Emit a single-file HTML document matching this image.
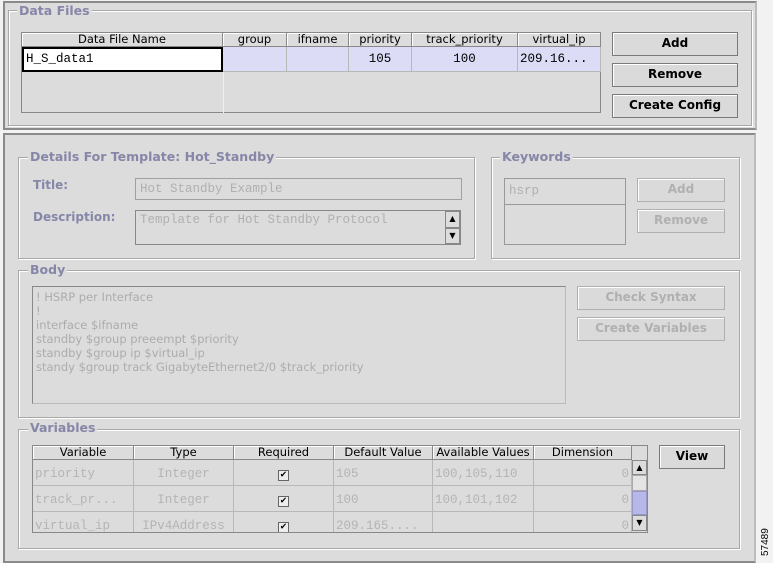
<!DOCTYPE html>
<html><head><meta charset="utf-8"><style>
*{box-sizing:border-box;margin:0;padding:0}
body{width:773px;height:557px;background:#f2f2f2;position:relative;overflow:hidden;font-family:"DejaVu Sans","Liberation Sans",sans-serif;font-size:12px;color:#000}
.a{position:absolute}
.panel{background:#dcdcdc}
.grp{position:absolute;border:1px solid #a8a8a8;box-shadow:1px 1px 0 #fff inset,1px 1px 0 #fff}
.gt{position:absolute;background:#dcdcdc;color:#8686a8;font-weight:bold;font-size:12.5px;padding:0 2px;line-height:14px}
.btn{position:absolute;border:1px solid #7a7a7a;background:#dadada;box-shadow:1px 1px 0 #fff inset;text-align:center;font-weight:bold;font-size:12px;line-height:21px}
.btn.d{color:#b0b0b0;border-color:#b0b0b0}
.th{position:absolute;top:0;height:14px;border-right:1px solid #888;border-bottom:1px solid #888;background:#dcdcdc;text-align:center;font-size:11.5px;line-height:13px;box-shadow:1px 1px 0 #fff inset}
.c{position:absolute;border-right:1px solid #b8b8b8;border-bottom:1px solid #b8b8b8;font-family:"Liberation Mono","DejaVu Sans Mono",monospace;font-size:12.5px;line-height:24px;white-space:nowrap;overflow:hidden}
.v{line-height:28px}
.g{color:#b4b4b4}
.lbl{position:absolute;color:#8686a8;font-weight:bold;font-size:12px}
.fld{position:absolute;border:1px solid #a0a0a0;background:#dcdcdc;font-family:"Liberation Mono",monospace;font-size:12.5px;color:#b0b0b0;padding-left:4px}
.sb{position:absolute;width:15px;background:#dcdcdc;border:1px solid #888;text-align:center;font-size:8px;line-height:13px}
.chk{position:absolute;width:11px;height:11px;border:1px solid #666;background:#eee;font-size:10px;line-height:9px;text-align:center;font-weight:bold}
</style></head><body>
<div class="a panel" style="left:3px;top:1px;width:754px;height:129px;border:2px solid #8a8a8a;border-right-color:#bcbcbc"></div>
<div class="grp" style="left:8px;top:10px;width:744px;height:116px"></div>
<div class="gt" style="left:17px;top:4px">Data Files</div>
<div class="a" style="left:21px;top:32px;width:580px;height:81px;border:1px solid #888;background:#dcdcdc">
 <div class="th" style="left:0;width:201px">Data File Name</div>
 <div class="th" style="left:201px;width:64px">group</div>
 <div class="th" style="left:265px;width:62px">ifname</div>
 <div class="th" style="left:327px;width:63px">priority</div>
 <div class="th" style="left:390px;width:106px">track_priority</div>
 <div class="th" style="left:496px;width:83px">virtual_ip</div>
 <div class="c" style="left:0;top:14px;width:201px;height:25px;background:#fff;border:2px solid #000;padding-left:2px;line-height:21px">H_S_data1</div>
 <div class="c" style="left:201px;top:14px;width:64px;height:25px;background:#dcdcf6"></div>
 <div class="c" style="left:265px;top:14px;width:62px;height:25px;background:#dcdcf6"></div>
 <div class="c" style="left:327px;top:14px;width:63px;height:25px;background:#dcdcf6;text-align:center">105</div>
 <div class="c" style="left:390px;top:14px;width:106px;height:25px;background:#dcdcf6;text-align:center">100</div>
 <div class="c" style="left:496px;top:14px;width:83px;height:25px;background:#dcdcf6;padding-left:2px">209.16...</div>
 <div class="a" style="left:201px;top:39px;width:1px;height:41px;background:#f0f0f0"></div>
</div>
<div class="btn" style="left:612px;top:32px;width:126px;height:24px">Add</div>
<div class="btn" style="left:612px;top:63px;width:126px;height:24px">Remove</div>
<div class="btn" style="left:612px;top:94px;width:126px;height:24px">Create Config</div>

<div class="a panel" style="left:3px;top:133px;width:753px;height:430px;border:2px solid #8a8a8a;border-right-color:#bcbcbc"></div>

<div class="grp" style="left:18px;top:157px;width:457px;height:102px"></div>
<div class="gt" style="left:28px;top:150px">Details For Template: Hot_Standby</div>
<div class="lbl" style="left:33px;top:178px">Title:</div>
<div class="fld" style="left:135px;top:178px;width:327px;height:22px;line-height:20px">Hot Standby Example</div>
<div class="lbl" style="left:33px;top:210px">Description:</div>
<div class="fld" style="left:135px;top:210px;width:326px;height:35px;line-height:18px;border-color:#888">Template for Hot Standby Protocol</div>
<div class="sb" style="left:445px;top:211px;height:17px">▲</div>
<div class="sb" style="left:445px;top:228px;height:16px">▼</div>

<div class="grp" style="left:491px;top:157px;width:249px;height:102px"></div>
<div class="gt" style="left:500px;top:150px">Keywords</div>
<div class="fld" style="left:504px;top:178px;width:122px;height:67px;border-color:#999"></div>
<div class="fld" style="left:504px;top:178px;width:122px;height:27px;line-height:25px;border-color:#999">hsrp</div>
<div class="btn d" style="left:637px;top:178px;width:88px;height:24px">Add</div>
<div class="btn d" style="left:637px;top:209px;width:88px;height:24px">Remove</div>

<div class="grp" style="left:18px;top:270px;width:722px;height:148px"></div>
<div class="gt" style="left:28px;top:263px">Body</div>
<div class="a" style="left:32px;top:286px;width:534px;height:118px;border:1px solid #888;border-right-color:#bbb;border-bottom-color:#bbb;color:#acacac;font-family:'DejaVu Sans',sans-serif;font-size:11.5px;line-height:14px;padding:3px 0 0 3px;white-space:pre">! HSRP per Interface
!
interface $ifname
standby $group preeempt $priority
standby $group ip $virtual_ip
standy $group track GigabyteEthernet2/0 $track_priority</div>
<div class="btn d" style="left:577px;top:286px;width:148px;height:24px">Check Syntax</div>
<div class="btn d" style="left:577px;top:317px;width:148px;height:24px">Create Variables</div>

<div class="grp" style="left:18px;top:429px;width:722px;height:120px"></div>
<div class="gt" style="left:28px;top:421px">Variables</div>
<div class="a" style="left:32px;top:445px;width:616px;height:88px;border:1px solid #888;background:#dcdcdc;overflow:hidden">
 <div class="th" style="left:0;width:101px">Variable</div>
 <div class="th" style="left:101px;width:100px">Type</div>
 <div class="th" style="left:201px;width:100px">Required</div>
 <div class="th" style="left:301px;width:99px">Default Value</div>
 <div class="th" style="left:400px;width:101px">Available Values</div>
 <div class="th" style="left:501px;width:98px">Dimension</div>
 <div class="c g v" style="left:0;top:14px;width:101px;height:26px;padding-left:2px">priority</div>
 <div class="c g v" style="left:101px;top:14px;width:100px;height:26px;text-align:center">Integer</div>
 <div class="c" style="left:201px;top:14px;width:100px;height:26px"><div class="chk" style="left:44px;top:10px">✔</div></div>
 <div class="c g v" style="left:301px;top:14px;width:99px;height:26px;padding-left:2px">105</div>
 <div class="c g v" style="left:400px;top:14px;width:101px;height:26px;padding-left:2px">100,105,110</div>
 <div class="c g v" style="left:501px;top:14px;width:98px;height:26px;text-align:right;padding-right:2px">0</div>
 <div class="c g v" style="left:0;top:40px;width:101px;height:26px;padding-left:2px">track_pr...</div>
 <div class="c g v" style="left:101px;top:40px;width:100px;height:26px;text-align:center">Integer</div>
 <div class="c" style="left:201px;top:40px;width:100px;height:26px"><div class="chk" style="left:44px;top:10px">✔</div></div>
 <div class="c g v" style="left:301px;top:40px;width:99px;height:26px;padding-left:2px">100</div>
 <div class="c g v" style="left:400px;top:40px;width:101px;height:26px;padding-left:2px">100,101,102</div>
 <div class="c g v" style="left:501px;top:40px;width:98px;height:26px;text-align:right;padding-right:2px">0</div>
 <div class="c g v" style="left:0;top:66px;width:101px;height:26px;padding-left:2px">virtual_ip</div>
 <div class="c g v" style="left:101px;top:66px;width:100px;height:26px;text-align:center">IPv4Address</div>
 <div class="c" style="left:201px;top:66px;width:100px;height:26px"><div class="chk" style="left:44px;top:10px">✔</div></div>
 <div class="c g v" style="left:301px;top:66px;width:99px;height:26px;padding-left:2px">209.165....</div>
 <div class="c g v" style="left:400px;top:66px;width:101px;height:26px"></div>
 <div class="c g v" style="left:501px;top:66px;width:98px;height:26px;text-align:right;padding-right:2px">0</div>
 <div class="sb" style="left:599px;top:14px;height:15px">▲</div>
 <div class="a" style="left:599px;top:29px;width:15px;height:16px;background:#e4e4e4;border:1px solid #aaa"></div>
 <div class="a" style="left:599px;top:45px;width:15px;height:24px;background:#b8b8e8;border:1px solid #9898c8"></div>
 <div class="sb" style="left:599px;top:69px;height:16px">▼</div>
</div>
<div class="btn" style="left:659px;top:445px;width:66px;height:24px">View</div>

<div class="a" style="font-size:10px;transform:rotate(-90deg);transform-origin:left top;top:556px;left:760px;font-family:'Liberation Sans',sans-serif">57489</div>
</body></html>
